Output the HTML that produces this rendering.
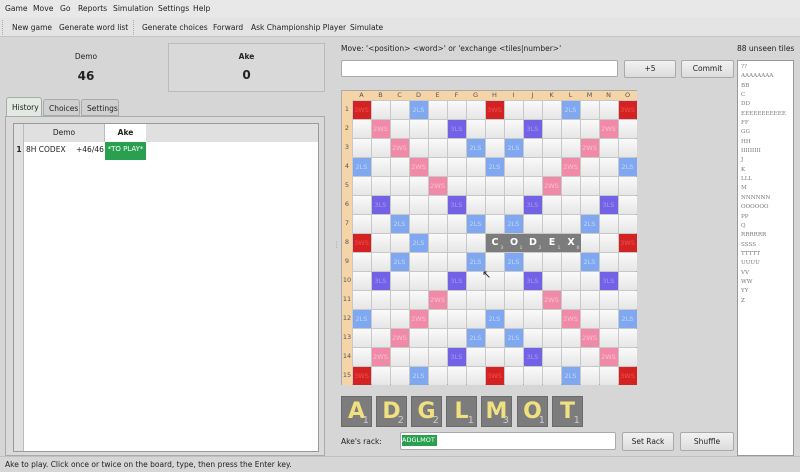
<!DOCTYPE html>
<html><head><meta charset="utf-8"><style>
*{box-sizing:border-box;margin:0;padding:0}
body{width:800px;height:472px;background:#d6d6d6;font-family:"DejaVu Sans","Liberation Sans",sans-serif;font-size:7.5px;color:#222;position:relative;overflow:hidden}
.a{position:absolute}
#menu{left:0;top:0;width:800px;height:18px;background:#e8e8e8;font-size:7.6px}
#menu span{position:absolute;top:4px}
#tb{left:0;top:18px;width:800px;height:19px;background:#e4e4e4;border-bottom:1px solid #c4c4c4;font-size:7.5px}
#tb span{position:absolute;top:5px}
.btn{background:linear-gradient(#f2f2f2,#dcdcdc);border:1px solid #aaa;border-radius:2px;text-align:center;font-size:7.5px}
.cell{position:absolute;width:18px;height:18px;background:linear-gradient(#fafafa,#e6e6e6);font-size:6.5px;text-align:center;line-height:18px}
.hd{position:absolute;background:#f5d5a8;color:#555;font-size:6.5px;text-align:center}
.tile{position:absolute;width:31px;height:31px;background:#7c7c7c;border:1px solid #6a6a6a;color:#f0e080;font-weight:bold;font-size:22px;text-align:center;line-height:30px}
.tile i{position:absolute;right:2px;bottom:-1px;font-style:normal;font-weight:normal;font-size:10px;color:#ccc;line-height:12px}
#unseen{font-family:"DejaVu Serif","Liberation Serif",serif;font-size:5.6px;color:#777;line-height:9.35px;padding:2px 3px;overflow:hidden;white-space:nowrap}
</style></head><body>
<div id="menu" class="a"><span style="left:5px">Game</span><span style="left:33px">Move</span><span style="left:60px">Go</span><span style="left:78px">Reports</span><span style="left:113px">Simulation</span><span style="left:158px">Settings</span><span style="left:193px">Help</span></div>
<div id="tb" class="a"><span style="left:12px">New game</span><span style="left:59px">Generate word list</span><span style="left:142px">Generate choices</span><span style="left:213px">Forward</span><span style="left:251px">Ask Championship Player</span><span style="left:350px">Simulate</span></div>
<div class="a" style="left:2px;top:20px;width:2px;height:15px;border-left:1px dotted #aaa"></div>
<div class="a" style="left:133px;top:20px;width:2px;height:15px;border-left:1px dotted #aaa"></div>

<div class="a" style="left:60px;top:52px;width:52px;text-align:center">Demo</div>
<div class="a" style="left:60px;top:69px;width:52px;text-align:center;font-size:12px;font-weight:bold">46</div>
<div class="a" style="left:168px;top:43px;width:157px;height:49px;border:1px solid #bbb;background:#d9d9d9"></div>
<div class="a" style="left:168px;top:52px;width:157px;text-align:center;font-weight:bold">Ake</div>
<div class="a" style="left:168px;top:68px;width:157px;text-align:center;font-size:12px;font-weight:bold">0</div>

<div class="a" style="left:6px;top:97px;width:36px;height:20px;background:#e2e8e2;border:1px solid #aaa;border-bottom:none;border-radius:3px 3px 0 0;padding:5px 0 0 5px">History</div>
<div class="a" style="left:43px;top:99px;width:37px;height:17px;background:#d0d0d0;border:1px solid #aaa;border-radius:3px 3px 0 0;padding:4px 0 0 5px">Choices</div>
<div class="a" style="left:81px;top:99px;width:38px;height:17px;background:#d0d0d0;border:1px solid #aaa;border-radius:3px 3px 0 0;padding:4px 0 0 5px">Settings</div>
<div class="a" style="left:5px;top:116px;width:320px;height:340px;border:1px solid #aaa;background:#dadada"></div>
<div class="a" style="left:13px;top:123px;width:306px;height:329px;background:#fff;border:1px solid #999"></div>
<div class="a" style="left:14px;top:124px;width:304px;height:18px;background:#e0e0e0"></div>
<div class="a" style="left:14px;top:124px;width:10px;height:327px;background:#e0e0e0;border-right:1px solid #bbb"></div>
<div class="a" style="left:24px;top:124px;width:81px;height:18px;border-right:1px solid #bbb;text-align:center;line-height:18px">Demo</div>
<div class="a" style="left:105px;top:124px;width:41px;height:18px;background:#fff;text-align:center;line-height:18px;font-weight:bold">Ake</div>
<div class="a" style="left:14px;top:142px;width:10px;height:18px;text-align:center;line-height:15px;font-weight:bold">1</div>
<div class="a" style="left:26px;top:145px">8H CODEX</div>
<div class="a" style="left:76px;top:145px">+46/46</div>
<div class="a" style="left:105px;top:142px;width:41px;height:18px;background:#28a050;color:#fff;text-align:center;line-height:14px;font-size:7px">*TO PLAY*</div>
<div class="a" style="left:333px;top:240px;color:#999">⋮</div>

<div class="a" style="left:341px;top:44px">Move: '&lt;position&gt; &lt;word&gt;' or 'exchange &lt;tiles|number&gt;'</div>
<div class="a" style="left:341px;top:60px;width:277px;height:17px;background:#fff;border:1px solid #aaa;border-radius:2px"></div>
<div class="a btn" style="left:624px;top:60px;width:52px;height:18px;line-height:16px">+5</div>
<div class="a btn" style="left:681px;top:60px;width:53px;height:18px;line-height:16px">Commit</div>
<div class="a" style="left:737px;top:44px">88 unseen tiles</div>
<div class="a" id="unseen" style="left:737px;top:60px;width:57px;height:396px;background:#fff;border:1px solid #999">??<br>AAAAAAAA<br>BB<br>C<br>DD<br>EEEEEEEEEEE<br>FF<br>GG<br>HH<br>IIIIIIIII<br>J<br>K<br>LLL<br>M<br>NNNNNN<br>OOOOOO<br>PP<br>Q<br>RRRRRR<br>SSSS<br>TTTTT<br>UUUU<br>VV<br>WW<br>YY<br>Z</div>

<div id="board" class="a" style="left:341px;top:90px;width:296px;height:295px;background:#c8c8c8;border:1px solid #aaa"></div>

<div class="tile" style="left:341px;top:396px">A<i>1</i></div>
<div class="tile" style="left:376px;top:396px">D<i>2</i></div>
<div class="tile" style="left:411px;top:396px">G<i>2</i></div>
<div class="tile" style="left:446px;top:396px">L<i>1</i></div>
<div class="tile" style="left:481px;top:396px">M<i>3</i></div>
<div class="tile" style="left:517px;top:396px">O<i>1</i></div>
<div class="tile" style="left:552px;top:396px">T<i>1</i></div>
<div class="a" style="left:341px;top:437px">Ake's rack:</div>
<div class="a" style="left:400px;top:432px;width:216px;height:18px;background:#fff;border:1px solid #aaa;border-radius:2px"></div>
<div class="a" style="left:402px;top:435px;width:35px;height:11px;background:#28a050;color:#fff;font-size:6.5px;line-height:11px">ADGLMOT</div>
<div class="a btn" style="left:622px;top:432px;width:52px;height:19px;line-height:17px">Set Rack</div>
<div class="a btn" style="left:680px;top:432px;width:54px;height:19px;line-height:17px">Shuffle</div>
<div class="a" style="left:0;top:456px;width:800px;height:1px;background:#c0c0c0"></div>
<div class="a" style="left:5px;top:460px">Ake to play. Click once or twice on the board, type, then press the Enter key.</div>
<div class="a" style="left:482px;top:268px;font-size:11px;color:#222">&#x2196;</div>

<script>
var b=document.getElementById('board');
var TW=["0,0","0,7","0,14","7,0","7,14","14,0","14,7","14,14"];
var DW=[],TL=[],DL=[];
for(var i=1;i<5;i++){DW.push(i+","+i,i+","+(14-i),(14-i)+","+i,(14-i)+","+(14-i));}
[[1,5],[1,9],[5,1],[5,5],[5,9],[5,13],[9,1],[9,5],[9,9],[9,13],[13,5],[13,9]].forEach(function(p){TL.push(p.join(","))});
[[0,3],[0,11],[2,6],[2,8],[3,0],[3,7],[3,14],[6,2],[6,6],[6,8],[6,12],[7,3],[7,11],[8,2],[8,6],[8,8],[8,12],[11,0],[11,7],[11,14],[12,6],[12,8],[14,3],[14,11]].forEach(function(p){DL.push(p.join(","))});
var h='';var L="ABCDEFGHIJKLMNO";
for(var c=0;c<15;c++)h+='<div class="hd" style="left:'+(10+c*19)+'px;top:0;width:19px;height:9px;line-height:9px">'+L[c]+'</div>';
h+='<div class="hd" style="left:0;top:0;width:10px;height:9px"></div>';
for(var r=0;r<15;r++){h+='<div class="hd" style="left:0;top:'+(9+r*19)+'px;width:10px;height:19px;line-height:19px">'+(r+1)+'</div>';
for(var c=0;c<15;c++){var k=r+","+c,bg='',t='',col='';
if(TW.indexOf(k)>=0){bg='#d42222';t='3WS';col='#f05050'}
else if(DW.indexOf(k)>=0||k=="7,7"){bg='#f08aa8';t='2WS';col='#f8c0d0'}
else if(TL.indexOf(k)>=0){bg='#7462e6';t='3LS';col='#a898f0'}
else if(DL.indexOf(k)>=0){bg='#80a8f0';t='2LS';col='#c0d4f8'}
var st='left:'+(10.5+c*19)+'px;top:'+(9.5+r*19)+'px;';
if(r==7&&c>=7&&c<=11){var w="CODEX"[c-7],sc=[3,1,2,1,8][c-7];
h+='<div class="cell" style="'+st+'background:#7c7c7c;color:#fff;font-weight:bold;font-size:9.5px;width:19px">'+w+'<i style="position:absolute;right:1px;bottom:-6px;font-size:4.5px;font-style:normal;color:#bbb">'+sc+'</i></div>';continue;}
h+='<div class="cell" style="'+st+(bg?'background:'+bg+';color:'+col:'')+'">'+t+'</div>';}}
b.innerHTML=h;
</script>
</body></html>
